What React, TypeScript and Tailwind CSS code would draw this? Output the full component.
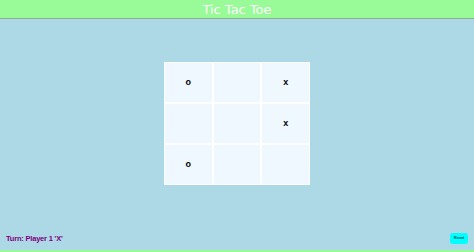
const board: string[] = ['o', '', 'x', '', '', 'x', 'o', '', ''];

export default function App() {
    return (
        <div className="flex h-[252px] w-[474px] flex-col bg-[#add8e6]" style={{ fontFamily: '"Liberation Sans", Arial, sans-serif' }}>
            <header className="flex h-[19px] items-center justify-center border-b border-[#8fae8f] bg-[#98fb98]">
                <h1 className="text-[13px] leading-none text-white" style={{ fontFamily: '"DejaVu Sans", sans-serif' }}>
                    Tic Tac Toe
                </h1>
            </header>
            <main className="flex flex-1 flex-col">
                <div className="mx-auto mt-[43px] grid w-[146px] grid-cols-3">
                    {board.map((v, i) => (
                        <div
                            key={i}
                            className="flex h-[41px] items-center justify-center border border-white bg-[#f0f8ff] text-[9px] font-bold text-black"
                        >
                            {v}
                        </div>
                    ))}
                </div>
                <div className="mt-auto flex items-center justify-between px-[6px] pb-[6px]">
                    <span className="text-[7.5px] font-bold tracking-[-0.2px] text-[#800080]">Turn: Player 1 'X'</span>
                    <button className="h-[11px] w-[18px] rounded-[3px] bg-[#00ffff] text-[4px] leading-none text-black">
                        Reset
                    </button>
                </div>
            </main>
            <div className="h-[2px] bg-[#98fb98]" />
        </div>
    );
}
